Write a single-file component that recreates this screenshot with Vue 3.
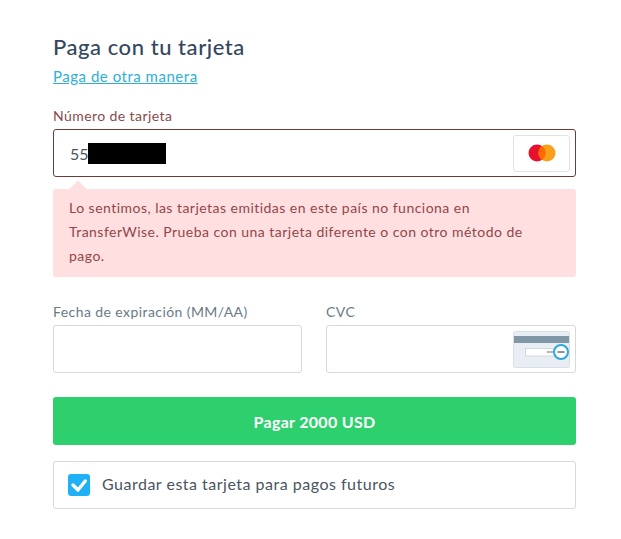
<script setup>
const errorText = 'Lo sentimos, las tarjetas emitidas en este país no funciona en TransferWise. Prueba con una tarjeta diferente o con otro método de pago.'
</script>

<template>
  <main class="page">
    <h1 class="title">Paga con tu tarjeta</h1>
    <a class="link" href="#">Paga de otra manera</a>

    <label class="label label-error">Número de tarjeta</label>
    <div class="input input-error">
      <span class="value">55<span class="redact"></span></span>
      <span class="brand">
        <svg width="28" height="18" viewBox="0 0 28 18">
          <circle cx="9" cy="9" r="8.5" fill="#e8112d" />
          <circle cx="19" cy="9" r="8.5" fill="#f9a01b" />
          <path d="M14 2a8.5 8.5 0 0 1 0 14a8.5 8.5 0 0 1 0-14z" fill="#ff6a00" />
        </svg>
      </span>
    </div>

    <div class="alert">{{ errorText }}</div>

    <div class="row">
      <div class="field">
        <label class="label">Fecha de expiración (MM/AA)</label>
        <div class="input"></div>
      </div>
      <div class="field">
        <label class="label">CVC</label>
        <div class="input cvc">
          <svg width="57" height="37" viewBox="0 0 57 37">
            <rect x="0.5" y="0.5" width="56" height="36" rx="2" fill="#e8eef4" stroke="#d8dfe6" />
            <rect x="1" y="5" width="55" height="7" fill="#7f97a6" />
            <rect x="12.5" y="17.5" width="38" height="7.5" fill="#fff" stroke="#c5ced6" stroke-width="0.7" />
            <path d="M34 21h6" stroke="#8f9ba5" stroke-width="1.4" />
            <circle cx="48" cy="21" r="7" fill="#fff" stroke="#2ea8d6" stroke-width="2" />
            <path d="M44.5 21h7" stroke="#6b7a86" stroke-width="1.6" />
          </svg>
        </div>
      </div>
    </div>

    <button class="pay" type="button">Pagar 2000 USD</button>

    <div class="save">
      <span class="check">
        <svg width="22" height="22" viewBox="0 0 22 22">
          <path d="M5 11l5 5l7.3-9" fill="none" stroke="#fff" stroke-width="3.4" stroke-linecap="round" stroke-linejoin="round" />
        </svg>
      </span>
      <span class="save-text">Guardar esta tarjeta para pagos futuros</span>
    </div>
  </main>
</template>

<style scoped>
.page {
  width: 523px;
  height: 539px;
  box-sizing: border-box;
  margin-left: 53px;
  padding-top: 33px;
  display: flex;
  flex-direction: column;
  font-family: Lato, "Noto Sans", sans-serif;
  color: #37474f;
}
.title {
  margin: 0;
  font-size: 22px;
  line-height: 28px;
  font-weight: 500;
  color: #33475f;
  letter-spacing: 0.55px;
}
.link {
  margin-top: 5px;
  align-self: flex-start;
  font-size: 15px;
  line-height: 20px;
  letter-spacing: 0.52px;
  color: #2eb0d6;
}
.label {
  display: block;
  font-size: 14px;
  line-height: 18px;
  letter-spacing: 0.42px;
  color: #6b7a86;
  margin-bottom: 4px;
}
.label-error {
  margin-top: 21px;
  color: #8a4a4a;
}
.input {
  height: 48px;
  box-sizing: border-box;
  border: 1px solid #d6dade;
  border-radius: 3px;
  background: #fff;
  display: flex;
  align-items: center;
}
.input-error {
  border-color: #6f3b38;
  justify-content: space-between;
  padding: 0 5px 0 16px;
}
.value {
  display: flex;
  align-items: center;
  font-size: 16px;
  color: #4a5560;
}
.redact {
  display: inline-block;
  width: 78px;
  height: 21px;
  margin-left: -1px;
  background: #000;
}
.brand {
  width: 57px;
  height: 37px;
  box-sizing: border-box;
  border: 1px solid #dfe3e6;
  border-radius: 3px;
  display: flex;
  align-items: center;
  justify-content: center;
}
.alert {
  position: relative;
  margin-top: 12px;
  height: 88px;
  box-sizing: border-box;
  padding: 7px 24px 8px 16px;
  background: #ffdfe0;
  border-radius: 3px;
  color: #93464a;
  font-size: 14px;
  line-height: 24px;
  letter-spacing: 0.47px;
}
.alert::before {
  content: "";
  position: absolute;
  left: 19px;
  top: -6px;
  width: 12px;
  height: 12px;
  background: #ffdfe0;
  transform: rotate(45deg);
}
.row {
  margin-top: 26px;
  display: grid;
  grid-template-columns: 249px 250px;
  column-gap: 24px;
}
.cvc {
  justify-content: flex-end;
  padding-right: 5px;
}
.pay {
  margin-top: 24px;
  height: 48px;
  border: 0;
  border-radius: 3px;
  background: #2ed06e;
  color: #fff;
  font-family: inherit;
  font-size: 16px;
  font-weight: 700;
  letter-spacing: 0.3px;
}
.save {
  margin-top: 16px;
  height: 48px;
  box-sizing: border-box;
  border: 1px solid #d6dade;
  border-radius: 3px;
  display: flex;
  align-items: center;
  padding-left: 14px;
  gap: 12px;
}
.check {
  width: 22px;
  height: 22px;
  border-radius: 3px;
  background: #1fb0f5;
  display: flex;
}
.save-text {
  margin-bottom: 3px;
  font-size: 16px;
  letter-spacing: 0.5px;
  color: #4a5560;
}
</style>
